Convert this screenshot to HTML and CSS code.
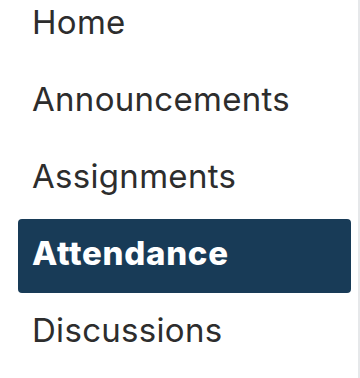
FILE: index.html
```html
<!DOCTYPE html>
<html lang="en">

<head>
  <meta charset="UTF-8">
  <meta name="viewport" content="width=device-width, initial-scale=1.0">
  <title>course nav</title>
  <link rel="stylesheet" href="styles.css">
</head>

<body>
  <nav class="nav">
    <ul class="nav-list">
      <li><a class="nav-link" href="#">Home</a></li>
      <li><a class="nav-link" href="#">Announcements</a></li>
      <li><a class="nav-link" href="#">Assignments</a></li>
      <li><a class="nav-link active" href="#">Attendance</a></li>
      <li><a class="nav-link" href="#">Discussions</a></li>
    </ul>
  </nav>
</body>

</html>
```

FILE: styles.css
```css
body {
  margin: 0;
  background: #fff;
  font-family: Inter, "Liberation Sans", sans-serif;
}

.nav {
  width: 358px;
  height: 378px;
  border-right: 2px solid #e6e8ea;
  overflow: hidden;
}

.nav-list {
  list-style: none;
  margin: -12px 0 0;
  padding: 0 7px 0 18px;
}

.nav-list li {
  margin-bottom: 3px;
}

.nav-link {
  display: block;
  height: 68px;
  line-height: 68px;
  padding: 0 0 6px 14px;
  border-radius: 4px;
  font-size: 33px;
  letter-spacing: 0.3px;
  color: #2d2d2d;
  text-decoration: none;
}

.nav-link.active {
  background: #183b57;
  color: #fff;
  font-weight: 800;
  letter-spacing: 0.7px;
}
```
